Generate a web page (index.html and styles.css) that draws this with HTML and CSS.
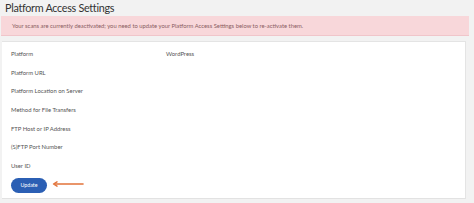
FILE: index.html
```html
<!DOCTYPE html>
<html lang="en">
<head>
    <meta charset="UTF-8">
    <meta name="viewport" content="width=device-width, initial-scale=1.0">
    <title>Platform Access Settings</title>
    <link rel="stylesheet" href="styles.css">
</head>
<body>
    <div class="page">
        <h1>Platform Access Settings</h1>
        <div class="alert">Your scans are currently deactivated; you need to update your Platform Access Settings below to re-activate them.</div>

        <div class="card">
            <div class="row"><span class="label">Platform</span><span class="value">WordPress</span></div>
            <div class="row"><span class="label">Platform URL</span><span class="value"></span></div>
            <div class="row"><span class="label">Platform Location on Server</span><span class="value"></span></div>
            <div class="row"><span class="label">Method for File Transfers</span><span class="value"></span></div>
            <div class="row"><span class="label">FTP Host or IP Address</span><span class="value"></span></div>
            <div class="row"><span class="label">(S)FTP Port Number</span><span class="value"></span></div>
            <div class="row"><span class="label">User ID</span><span class="value"></span></div>

            <div class="actions">
                <button class="btn">Update</button>
                <svg class="arrow" width="32" height="6" viewBox="0 0 32 6">
                    <path d="M31 3 H3" stroke="#e2733a" stroke-width="1.6" stroke-linecap="round"/>
                    <path d="M5 0.8 L1.5 3 L5 5.2" fill="none" stroke="#e2733a" stroke-width="1.4" stroke-linecap="round" stroke-linejoin="round"/>
                </svg>
            </div>
        </div>
    </div>
</body>
</html>
```

FILE: styles.css
```css
body {
    margin: 0;
    background-color: #f2f2f2;
    font-family: Lato, 'Open Sans', sans-serif;
    color: #555;
}

.page {
    width: 474px;
    height: 203px;
    overflow: hidden;
}

h1 {
    margin: 0;
    padding: 1px 0 0 5px;
    font-size: 10.8px;
    font-weight: 400;
    letter-spacing: -0.3px;
    line-height: 14px;
    color: #333;
}

.alert {
    margin: 1px 5px 0 1px;
    height: 19px;
    padding-left: 11px;
    background-color: #f8d7da;
    border-bottom: 1px solid #f0c5ca;
    color: #8a5d62;
    font-size: 5.85px;
    line-height: 19px;
}

.card {
    margin: 5px 8px 0 2px;
    height: 158px;
    background-color: #fff;
    border-top: 1px solid #e4e4e4;
    border-right: 1px solid #e4e4e4;
    border-bottom: 1px solid #e2e2e2;
    padding: 2px 0 0 9px;
    box-sizing: border-box;
}

.row {
    display: flex;
    align-items: center;
    height: 18.7px;
    font-size: 5.9px;
}

.label {
    width: 155px;
}

.value {
    color: #555;
}

.actions {
    display: flex;
    align-items: center;
    gap: 5px;
    margin-top: 3px;
}

.btn {
    width: 36px;
    height: 15px;
    border: none;
    border-radius: 8px;
    background-color: #2b5fb4;
    color: #fff;
    font-family: Lato, sans-serif;
    font-size: 5.3px;
    padding: 0;
}

.arrow {
    margin-top: -3px;
}
```
